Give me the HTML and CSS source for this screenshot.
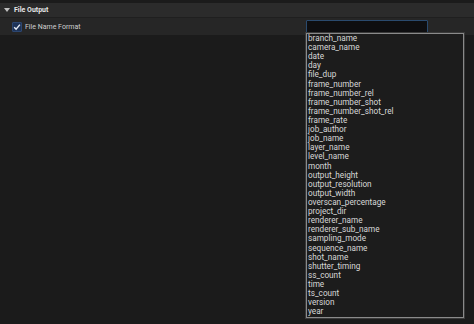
FILE: index.html
```html
<!DOCTYPE html>
<html lang="en">
<head>
    <meta charset="UTF-8">
    <title>File Output</title>
    <link rel="stylesheet" href="styles.css">
</head>
<body>
    <div class="panel">
        <div class="section-header">
            <span class="arrow"></span>
            <span class="section-title">File Output</span>
        </div>
        <div class="prop-row">
            <div class="prop-name">
                <span class="checkbox">
                    <svg width="8" height="8" viewBox="0 0 8 8"><path d="M1.2 4.2 L3.1 6.2 L6.9 1.6" fill="none" stroke="#e8edf5" stroke-width="1.4"/></svg>
                </span>
                <span class="prop-label">File Name Format</span>
            </div>
            <div class="prop-value">
                <div class="text-input"></div>
                <ul class="suggestions">
                    <li>branch_name</li>
                    <li>camera_name</li>
                    <li>date</li>
                    <li>day</li>
                    <li>file_dup</li>
                    <li>frame_number</li>
                    <li>frame_number_rel</li>
                    <li>frame_number_shot</li>
                    <li>frame_number_shot_rel</li>
                    <li>frame_rate</li>
                    <li>job_author</li>
                    <li>job_name</li>
                    <li>layer_name</li>
                    <li>level_name</li>
                    <li>month</li>
                    <li>output_height</li>
                    <li>output_resolution</li>
                    <li>output_width</li>
                    <li>overscan_percentage</li>
                    <li>project_dir</li>
                    <li>renderer_name</li>
                    <li>renderer_sub_name</li>
                    <li>sampling_mode</li>
                    <li>sequence_name</li>
                    <li>shot_name</li>
                    <li>shutter_timing</li>
                    <li>ss_count</li>
                    <li>time</li>
                    <li>ts_count</li>
                    <li>version</li>
                    <li>year</li>
                </ul>
            </div>
        </div>
    </div>
</body>
</html>
```

FILE: styles.css
```css
body {
    margin: 0;
    padding: 0;
    background-color: #1b1b1b;
    font-family: Roboto, "Noto Sans", sans-serif;
    width: 474px;
    height: 324px;
    overflow: hidden;
}
.panel {
    padding-top: 3px;
}
.section-header {
    height: 14px;
    background-color: #2b2b2b;
    display: flex;
    align-items: center;
    padding-left: 4px;
    border-bottom: 1px solid #1f1f1f;
}
.arrow {
    width: 0;
    height: 0;
    border-left: 3px solid transparent;
    border-right: 3px solid transparent;
    border-top: 4px solid #c0c0c0;
    margin-right: 4px;
}
.section-title {
    font-size: 7px;
    font-weight: bold;
    color: #e6e6e6;
}
.prop-row {
    height: 17px;
    background-color: #262626;
    display: flex;
    align-items: center;
}
.prop-name {
    width: 306px;
    display: flex;
    align-items: center;
    padding-left: 12px;
    box-sizing: border-box;
}
.checkbox {
    width: 8px;
    height: 8px;
    background-color: #1d3358;
    border: 1px solid #2c4670;
    border-radius: 1px;
    display: flex;
    align-items: center;
    justify-content: center;
    margin-right: 3px;
}
.prop-label {
    font-size: 7px;
    color: #cfcfcf;
}
.prop-value {
    position: relative;
    height: 17px;
    display: flex;
    align-items: center;
}
.text-input {
    width: 120px;
    height: 11px;
    background-color: #0e0e10;
    border: 1px solid #2a4a6e;
    border-radius: 1px;
}
.suggestions {
    position: absolute;
    left: 0;
    top: 15px;
    width: 155px;
    margin: 0;
    padding: 0 0 1px 1px;
    list-style: none;
    background-color: #1c1c1c;
    border: 1px solid #8a8a8a;
    outline: 1px solid #3a3a3a;
    z-index: 2;
}
.suggestions li {
    font-size: 8.2px;
    line-height: 9.12px;
    height: 9.12px;
    color: #d8d8d8;
    white-space: nowrap;
}
```
